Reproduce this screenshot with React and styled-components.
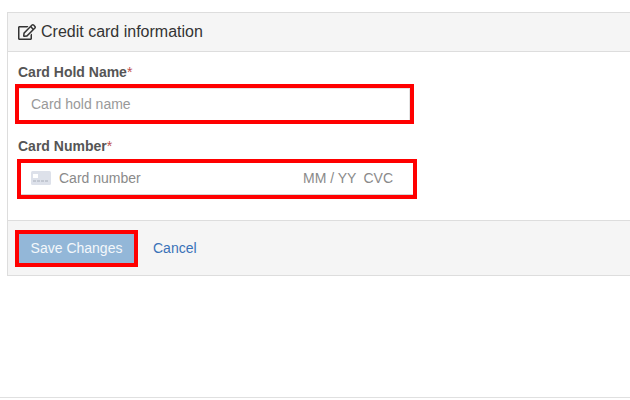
import React from "react";
import styled, { createGlobalStyle } from "styled-components";
import { FaRegEdit } from "react-icons/fa";

const Global = createGlobalStyle`
  html, body { margin: 0; padding: 0; background: #fff; overflow: hidden; }
  body { font-family: "Liberation Sans", Arial, sans-serif; width: 630px; height: 400px; }
`;

const Page = styled.div`
  width: 630px;
  height: 400px;
  display: flex;
  flex-direction: column;
  padding: 12px 0 0 7px;
  box-sizing: border-box;
  overflow: hidden;
`;

const Panel = styled.section`
  width: 640px;
  height: 264px;
  flex: none;
  box-sizing: border-box;
  border: 1px solid #ddd;
  display: flex;
  flex-direction: column;
`;

const Heading = styled.header`
  height: 39px;
  box-sizing: border-box;
  background: #f5f5f5;
  border-bottom: 1px solid #ddd;
  display: flex;
  align-items: center;
  gap: 5px;
  padding-left: 10px;
  font-size: 16px;
  color: #333;
`;

const Body = styled.div`
  flex: 1;
  display: flex;
  flex-direction: column;
  padding: 12px 0 0 7px;
`;

const Label = styled.label`
  font-size: 14px;
  font-weight: 700;
  line-height: 17px;
  color: #555;
  margin: ${p => p.$top}px 0 0 3px;
  display: block;
  em { color: #c0504c; font-style: normal; font-weight: 400; }
`;

const Field = styled.div`
  box-sizing: border-box;
  width: ${p => p.$width}px;
  height: 40px;
  margin: ${p => p.$margin};
  border: 4px solid #ff0000;
  display: flex;
  align-items: center;
  background: #fff;
  font-size: 14px;
  color: #999;
`;

const NameField = styled(Field)`
  padding-left: 12px;
  box-shadow: inset 0 1px 0 #e4e4e4, inset -1px 0 0 #e4e4e4;
`;

const CardField = styled(Field)`
  padding: 0 20px 2px 10px;
  gap: 8px;
  color: #8a8a8a;
  box-shadow: inset 0 -1px 0 #d4d4d4;
`;

const CardText = styled.span`
  flex: 1;
`;

const CardMeta = styled.span`
  margin-left: ${p => p.$gap}px;
  color: #8a8a8a;
`;

const Footer = styled.footer`
  height: 55px;
  box-sizing: border-box;
  background: #f5f5f5;
  border-top: 1px solid #ddd;
  display: flex;
  align-items: center;
  padding-left: 7px;
  margin-top: auto;
`;

const SaveButton = styled.button`
  box-sizing: border-box;
  width: 123px;
  height: 37px;
  border: 4px solid #ff0000;
  background: #93b7d8;
  color: #f4f7fb;
  font-family: inherit;
  font-size: 14px;
  padding: 0;
`;

const CancelLink = styled.a`
  color: #3a72b8;
  font-size: 14px;
  margin-left: 15px;
  text-decoration: none;
`;

const PageEnd = styled.div`
  margin: auto 0 2px -7px;
  height: 1px;
  flex: none;
  background: #e0e0e0;
`;

const CardGlyph = styled.svg`
  flex: none;
`;

const CardIcon = () => (
  <CardGlyph width="20" height="14" viewBox="0 0 20 14">
    <rect width="20" height="14" rx="1.5" fill="#dde1ea" />
    <rect x="2" y="3" width="5" height="4" fill="#fff" />
    <path d="M2 10h3M6 10h3M10 10h3M14 10h3" stroke="#a8aeb9" strokeWidth="1" />
  </CardGlyph>
);

export default function App() {
  return (
    <>
      <Global />
      <Page>
        <Panel>
          <Heading>
            <FaRegEdit size={18} color="#333" />
            <span>Credit card information</span>
          </Heading>
          <Body>
            <Label $top={0}>Card Hold Name<em>*</em></Label>
            <NameField $width={399} $margin="3px 0 0 0">Card hold name</NameField>
            <Label $top={14}>Card Number<em>*</em></Label>
            <CardField $width={400} $margin="4px 0 0 2px">
              <CardIcon />
              <CardText>Card number</CardText>
              <CardMeta $gap={0}>MM / YY</CardMeta>
              <CardMeta $gap={-1}>CVC</CardMeta>
            </CardField>
          </Body>
          <Footer>
            <SaveButton>Save Changes</SaveButton>
            <CancelLink href="#">Cancel</CancelLink>
          </Footer>
        </Panel>
        <PageEnd />
      </Page>
    </>
  );
}
